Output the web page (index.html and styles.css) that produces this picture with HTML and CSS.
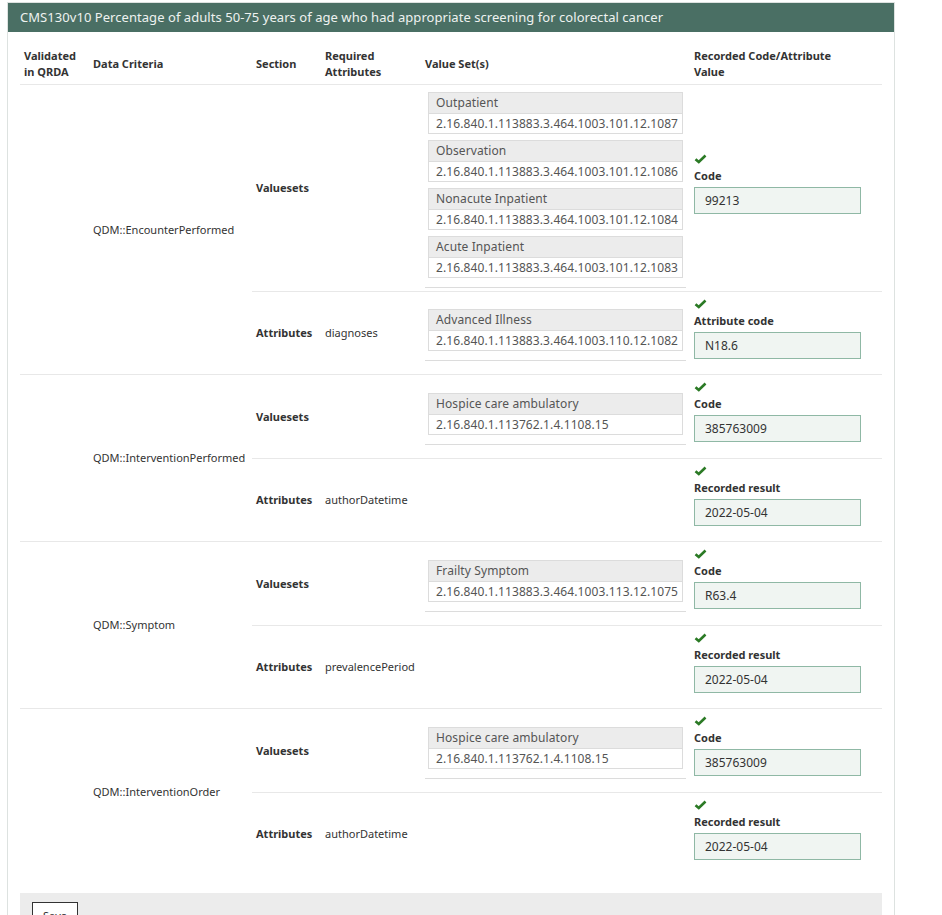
FILE: index.html
```html
<!DOCTYPE html>
<html>
<head>
<meta charset="utf-8">
<title>CMS130v10</title>
<link rel="stylesheet" href="styles.css">
</head>
<body>
<div class="panel">
  <div class="panel-heading">CMS130v10 Percentage of adults 50-75 years of age who had appropriate screening for colorectal cancer</div>
  <div class="panel-body">
    <table class="criteria">
      <colgroup>
        <col class="c-valid"><col class="c-crit"><col class="c-sec"><col class="c-attr"><col class="c-vs"><col class="c-rec">
      </colgroup>
      <thead>
        <tr>
          <th>Validated in QRDA</th>
          <th>Data Criteria</th>
          <th>Section</th>
          <th>Required Attributes</th>
          <th>Value Set(s)</th>
          <th class="th-rec">Recorded Code/Attribute Value</th>
        </tr>
      </thead>
      <tbody>
        <!-- EncounterPerformed -->
        <tr>
          <td rowspan="2"></td>
          <td rowspan="2">QDM::EncounterPerformed</td>
          <td class="sec">Valuesets</td>
          <td></td>
          <td class="vs">
            <div class="vs-list">
              <div class="vs-box"><div class="vs-name">Outpatient</div><div class="vs-oid">2.16.840.1.113883.3.464.1003.101.12.1087</div></div>
              <div class="vs-box"><div class="vs-name">Observation</div><div class="vs-oid">2.16.840.1.113883.3.464.1003.101.12.1086</div></div>
              <div class="vs-box"><div class="vs-name">Nonacute Inpatient</div><div class="vs-oid">2.16.840.1.113883.3.464.1003.101.12.1084</div></div>
              <div class="vs-box"><div class="vs-name">Acute Inpatient</div><div class="vs-oid">2.16.840.1.113883.3.464.1003.101.12.1083</div></div>
            </div>
          </td>
          <td class="rec">
            <div class="check"><svg width="13" height="10" viewBox="0 0 13 10"><path d="M1.5 5.2 L4.8 8 L11.5 1.5" fill="none" stroke="#2b7a25" stroke-width="2.6"/></svg></div>
            <div class="rec-label">Code</div>
            <div class="rec-input">99213</div>
          </td>
        </tr>
        <tr>
          <td class="sec">Attributes</td>
          <td>diagnoses</td>
          <td class="vs">
            <div class="vs-list">
              <div class="vs-box"><div class="vs-name">Advanced Illness</div><div class="vs-oid">2.16.840.1.113883.3.464.1003.110.12.1082</div></div>
            </div>
          </td>
          <td class="rec">
            <div class="check"><svg width="13" height="10" viewBox="0 0 13 10"><path d="M1.5 5.2 L4.8 8 L11.5 1.5" fill="none" stroke="#2b7a25" stroke-width="2.6"/></svg></div>
            <div class="rec-label">Attribute code</div>
            <div class="rec-input">N18.6</div>
          </td>
        </tr>

        <!-- InterventionPerformed -->
        <tr>
          <td rowspan="2"></td>
          <td rowspan="2">QDM::InterventionPerformed</td>
          <td class="sec">Valuesets</td>
          <td></td>
          <td class="vs">
            <div class="vs-list">
              <div class="vs-box"><div class="vs-name">Hospice care ambulatory</div><div class="vs-oid">2.16.840.1.113762.1.4.1108.15</div></div>
            </div>
          </td>
          <td class="rec vrow">
            <div class="check"><svg width="13" height="10" viewBox="0 0 13 10"><path d="M1.5 5.2 L4.8 8 L11.5 1.5" fill="none" stroke="#2b7a25" stroke-width="2.6"/></svg></div>
            <div class="rec-label">Code</div>
            <div class="rec-input">385763009</div>
          </td>
        </tr>
        <tr>
          <td class="sec">Attributes</td>
          <td>authorDatetime</td>
          <td class="vs"></td>
          <td class="rec">
            <div class="check"><svg width="13" height="10" viewBox="0 0 13 10"><path d="M1.5 5.2 L4.8 8 L11.5 1.5" fill="none" stroke="#2b7a25" stroke-width="2.6"/></svg></div>
            <div class="rec-label">Recorded result</div>
            <div class="rec-input">2022-05-04</div>
          </td>
        </tr>

        <!-- Symptom -->
        <tr>
          <td rowspan="2"></td>
          <td rowspan="2">QDM::Symptom</td>
          <td class="sec">Valuesets</td>
          <td></td>
          <td class="vs">
            <div class="vs-list">
              <div class="vs-box"><div class="vs-name">Frailty Symptom</div><div class="vs-oid">2.16.840.1.113883.3.464.1003.113.12.1075</div></div>
            </div>
          </td>
          <td class="rec vrow">
            <div class="check"><svg width="13" height="10" viewBox="0 0 13 10"><path d="M1.5 5.2 L4.8 8 L11.5 1.5" fill="none" stroke="#2b7a25" stroke-width="2.6"/></svg></div>
            <div class="rec-label">Code</div>
            <div class="rec-input">R63.4</div>
          </td>
        </tr>
        <tr>
          <td class="sec">Attributes</td>
          <td>prevalencePeriod</td>
          <td class="vs"></td>
          <td class="rec">
            <div class="check"><svg width="13" height="10" viewBox="0 0 13 10"><path d="M1.5 5.2 L4.8 8 L11.5 1.5" fill="none" stroke="#2b7a25" stroke-width="2.6"/></svg></div>
            <div class="rec-label">Recorded result</div>
            <div class="rec-input">2022-05-04</div>
          </td>
        </tr>

        <!-- InterventionOrder -->
        <tr>
          <td rowspan="2"></td>
          <td rowspan="2">QDM::InterventionOrder</td>
          <td class="sec">Valuesets</td>
          <td></td>
          <td class="vs">
            <div class="vs-list">
              <div class="vs-box"><div class="vs-name">Hospice care ambulatory</div><div class="vs-oid">2.16.840.1.113762.1.4.1108.15</div></div>
            </div>
          </td>
          <td class="rec vrow">
            <div class="check"><svg width="13" height="10" viewBox="0 0 13 10"><path d="M1.5 5.2 L4.8 8 L11.5 1.5" fill="none" stroke="#2b7a25" stroke-width="2.6"/></svg></div>
            <div class="rec-label">Code</div>
            <div class="rec-input">385763009</div>
          </td>
        </tr>
        <tr>
          <td class="sec">Attributes</td>
          <td>authorDatetime</td>
          <td class="vs"></td>
          <td class="rec">
            <div class="check"><svg width="13" height="10" viewBox="0 0 13 10"><path d="M1.5 5.2 L4.8 8 L11.5 1.5" fill="none" stroke="#2b7a25" stroke-width="2.6"/></svg></div>
            <div class="rec-label">Recorded result</div>
            <div class="rec-input">2022-05-04</div>
          </td>
        </tr>
      </tbody>
    </table>
    <div class="actions">
      <button class="btn" type="button">Save</button>
    </div>
  </div>
</div>
</body>
</html>
```

FILE: styles.css
```css
html, body {
  margin: 0;
  padding: 0;
  background: #fff;
  overflow: hidden;
}
body {
  font-family: "Noto Sans", "Open Sans", sans-serif;
  color: #333;
  font-size: 11px;
}
.panel {
  width: 886px;
  margin: 2px 0 0 7px;
  border: 1px solid #dde2e0;
  border-bottom: none;
}
.panel-heading {
  background: #4a6f64;
  color: #eef2f0;
  font-size: 13px;
  line-height: 17px;
  padding: 6px 12px;
  letter-spacing: 0.05px;
}
.panel-body {
  padding: 12px 11px 0 12px;
}
.criteria {
  width: 862px;
  table-layout: fixed;
  border-collapse: collapse;
  border-spacing: 0;
  margin-bottom: 18px;
}
.c-valid { width: 69px; }
.c-crit { width: 163px; }
.c-sec { width: 69px; }
.c-attr { width: 100px; }
.c-vs { width: 269px; }
.c-rec { width: 192px; }

.criteria th {
  text-align: left;
  font-weight: 700;
  font-size: 11px;
  line-height: 16px;
  padding: 4px 4px;
  vertical-align: middle;
}
.criteria th.th-rec {
  padding-right: 40px;
}
.criteria td {
  border-top: 1px solid #e8e8e8;
  padding: 4px 4px;
  vertical-align: middle;
  line-height: 16px;
}
.criteria td.sec {
  font-weight: 700;
}
.criteria td.vs {
  padding: 4px 4px 3px 4px;
}
.vs-list {
  padding: 3px 3px 3px 3px;
  border-bottom: 1px solid #dcdcdc;
}
.vs-box {
  border: 1px solid #dcdcdc;
  margin-bottom: 6px;
  font-size: 12px;
  color: #555;
  letter-spacing: 0.1px;
}
.vs-name {
  background: #ececec;
  line-height: 20px;
  padding: 0 7px;
  border-bottom: 1px solid #dcdcdc;
}
.vs-oid {
  background: #fff;
  line-height: 19px;
  padding: 0 7px;
  white-space: nowrap;
}
.criteria td.rec {
  padding: 4px 4px 5px 4px;
}
.criteria td.rec.vrow {
  padding-bottom: 6px;
}
.check {
  height: 14px;
}
.check svg {
  display: block;
  margin-top: 3px;
}
.rec-label {
  font-weight: 700;
  line-height: 16px;
  margin-bottom: 3px;
}
.rec-input {
  width: 145px;
  height: 25px;
  line-height: 25px;
  padding: 0 10px;
  border: 1px solid #8fb8a5;
  background: #f0f5f2;
  font-size: 12px;
  color: #333;
  margin-bottom: 10px;
}
.actions {
  width: 838px;
  background: #ececec;
  padding: 9px 12px;
  height: 40px;
}
.btn {
  font-family: "Noto Sans", sans-serif;
  font-size: 11px;
  background: #fff;
  border: 1px solid #333;
  border-radius: 0;
  width: 46px;
  height: 26px;
  padding: 0;
  color: #333;
}
```
